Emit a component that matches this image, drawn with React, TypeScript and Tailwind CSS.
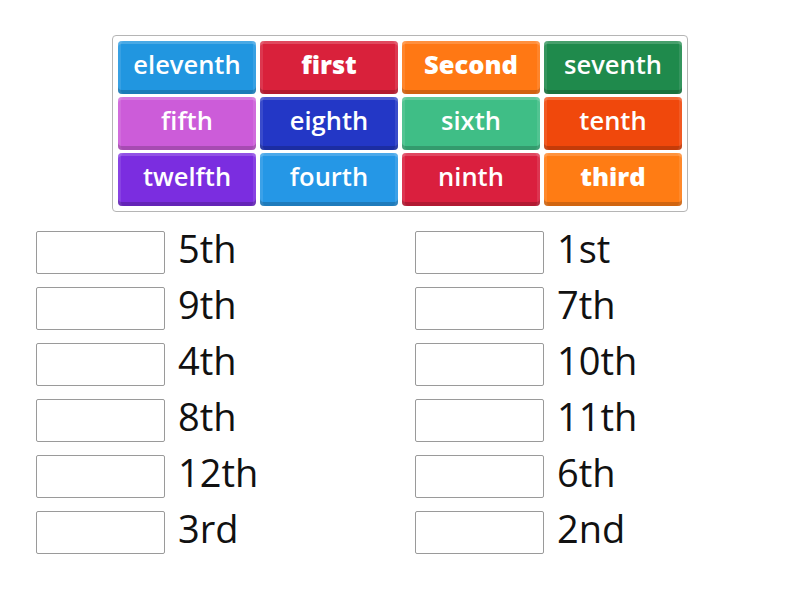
import React from "react";

type Tile = { label: string; bg: string; bold?: boolean };

const tiles: Tile[] = [
  { label: "eleventh", bg: "bg-[#2196e0]" },
  { label: "first", bg: "bg-[#d9213b]", bold: true },
  { label: "Second", bg: "bg-[#ff7814]", bold: true },
  { label: "seventh", bg: "bg-[#1f8a4c]" },
  { label: "fifth", bg: "bg-[#cc5cd9]" },
  { label: "eighth", bg: "bg-[#2337c6]" },
  { label: "sixth", bg: "bg-[#3fbe86]" },
  { label: "tenth", bg: "bg-[#f0480c]" },
  { label: "twelfth", bg: "bg-[#7b2de0]" },
  { label: "fourth", bg: "bg-[#2597e6]" },
  { label: "ninth", bg: "bg-[#da1f3e]" },
  { label: "third", bg: "bg-[#ff7c14]", bold: true },
];

const left = ["5th", "9th", "4th", "8th", "12th", "3rd"];
const right = ["1st", "7th", "10th", "11th", "6th", "2nd"];

function Slot({ text }: { text: string }) {
  return (
    <div className="flex items-center h-[42px] gap-[13px]">
      <div className="w-[129px] h-[43px] border border-[#9a9a9a] rounded-[2px] bg-white" />
      <span className="text-[38px] leading-none text-[#111] -mt-[9px]">{text}</span>
    </div>
  );
}

export default function App() {
  return (
    <div
      className="w-[800px] h-[600px] bg-white pt-[35px]"
      style={{ fontFamily: '"Open Sans", sans-serif' }}
    >
      <div className="mx-auto w-[576px] border border-[#b5b5b5] rounded-[4px] p-[5px] grid grid-cols-4 gap-x-[4px] gap-y-[3px]">
        {tiles.map((t) => (
          <div
            key={t.label}
            className={`${t.bg} h-[53px] rounded-[4px] flex items-center justify-center text-white text-[25.5px] leading-none pb-[6px] shadow-[inset_0_-4px_0_rgba(0,0,0,0.18),inset_0_3px_0_rgba(255,255,255,0.18),inset_3px_0_0_rgba(255,255,255,0.1),inset_-3px_0_0_rgba(255,255,255,0.1)] ${
              t.bold ? "font-extrabold" : "font-semibold"
            }`}
          >
            {t.label}
          </div>
        ))}
      </div>

      <div className="mt-[19px] pl-[36px] flex">
        <div className="w-[379px] flex flex-col gap-[14px]">
          {left.map((l) => (
            <Slot key={l} text={l} />
          ))}
        </div>
        <div className="flex flex-col gap-[14px]">
          {right.map((r) => (
            <Slot key={r} text={r} />
          ))}
        </div>
      </div>
    </div>
  );
}
